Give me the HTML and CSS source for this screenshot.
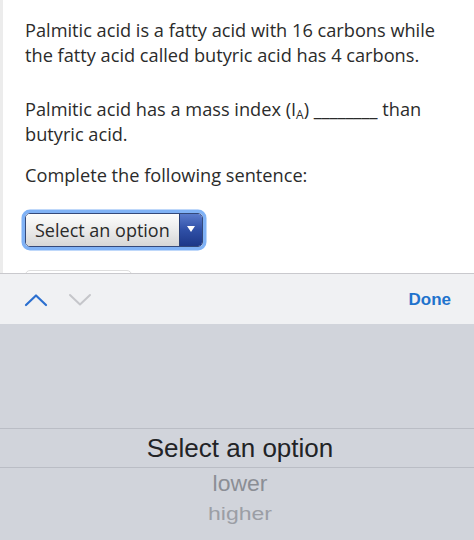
FILE: index.html
```html
<!DOCTYPE html>
<html>
<head>
<meta charset="utf-8">
<link rel="stylesheet" href="styles.css">
</head>
<body>
<div class="content">
  <p class="p1">Palmitic acid is a fatty acid with 16 carbons while the fatty acid called butyric acid has 4 carbons.</p>
  <p class="p2">Palmitic acid has a mass index (I<sub>A</sub>) ________ than butyric acid.</p>
  <p class="p3">Complete the following sentence:</p>
  <div class="select">
    <span class="select-label">Select an option</span>
    <span class="select-arrow"><span class="tri"></span></span>
  </div>
  <div class="ghost"></div>
</div>
<div class="toolbar">
  <div class="navs">
    <svg class="chev" width="24" height="14" viewBox="0 0 24 14"><path d="M2 12 L12 2.5 L22 12" fill="none" stroke="#2b6fcf" stroke-width="2.2" stroke-linecap="round" stroke-linejoin="round"/></svg>
    <svg class="chev" width="24" height="14" viewBox="0 0 24 14"><path d="M2 2 L12 11.5 L22 2" fill="none" stroke="#c5c6ca" stroke-width="2" stroke-linecap="round" stroke-linejoin="round"/></svg>
  </div>
  <span class="done">Done</span>
</div>
<div class="picker">
  <div class="band">Select an option</div>
  <div class="opt lower">lower</div>
  <div class="opt higher">higher</div>
</div>
</body>
</html>
```
FILE: styles.css
```css
html, body {
  margin: 0;
  padding: 0;
  background: #ffffff;
}
body {
  width: 474px;
  height: 540px;
  overflow: hidden;
}
.content {
  height: 273px;
  overflow: hidden;
  box-sizing: border-box;
  border-left: 3px solid #ececec;
  padding: 18px 28px 0 22px;
  font-family: "Open Sans", "Noto Sans", sans-serif;
  font-size: 18.2px;
  line-height: 25px;
  color: #2b2b2b;
}
.content p {
  margin: 0;
}
.p2 {
  margin-top: 29px !important;
}
.p3 {
  margin-top: 16px !important;
}
sub {
  font-size: 12px;
  line-height: 0;
  vertical-align: -3px;
}
.select {
  margin-top: 25px;
  width: 178px;
  height: 34px;
  box-sizing: border-box;
  display: flex;
  border: 1px solid #34497a;
  border-radius: 5px;
  box-shadow: 0 0 0 3.5px #80b2f6;
  overflow: hidden;
}
.select-label {
  flex: 1;
  display: flex;
  align-items: center;
  padding-left: 9px;
  background: linear-gradient(#fdfdfd, #e9e9e9 55%, #d6d6d6);
  font-size: 18px;
  color: #2a2a2a;
}
.select-arrow {
  width: 22px;
  display: flex;
  align-items: center;
  justify-content: center;
  border-left: 1px solid #2a3f74;
  background: linear-gradient(#5a7bcc, #2f4fa6 50%, #1d3788);
}
.tri {
  width: 0;
  height: 0;
  border-left: 4px solid transparent;
  border-right: 4px solid transparent;
  border-top: 6px solid #ffffff;
  margin-top: -2px;
}
.ghost {
  margin-top: 23px;
  width: 107px;
  height: 8px;
  box-sizing: border-box;
  border: 1px solid #dedede;
  border-radius: 5px 5px 0 0;
}
.toolbar {
  height: 51px;
  box-sizing: border-box;
  border-top: 1px solid #c9c9cd;
  background: #f0f1f3;
  display: flex;
  align-items: center;
  justify-content: space-between;
  padding: 0 23px 0 24px;
}
.navs {
  display: flex;
  gap: 20px;
  align-items: center;
  margin-top: 2px;
}
.chev {
  display: block;
}
.done {
  font-family: "Liberation Sans", Arial, sans-serif;
  font-weight: bold;
  font-size: 17px;
  color: #1f73cd;
  margin-top: 2px;
}
.picker {
  height: 216px;
  background: #d1d4db;
  padding-top: 104px;
  box-sizing: border-box;
  font-family: "Liberation Sans", Arial, sans-serif;
  text-align: center;
}
.band {
  height: 40px;
  box-sizing: border-box;
  border-top: 1px solid #babdc5;
  border-bottom: 1px solid #babdc5;
  font-size: 26px;
  line-height: 38px;
  color: #222326;
  padding-left: 6px;
}
.opt {
  height: 30px;
  line-height: 30px;
  font-size: 23px;
  padding-left: 6px;
}
.lower {
  color: #8b8e95;
  transform: scaleY(0.95);
}
.higher {
  color: #9b9ea5;
  transform: scaleY(0.78);
  margin-top: 1px;
}
```
